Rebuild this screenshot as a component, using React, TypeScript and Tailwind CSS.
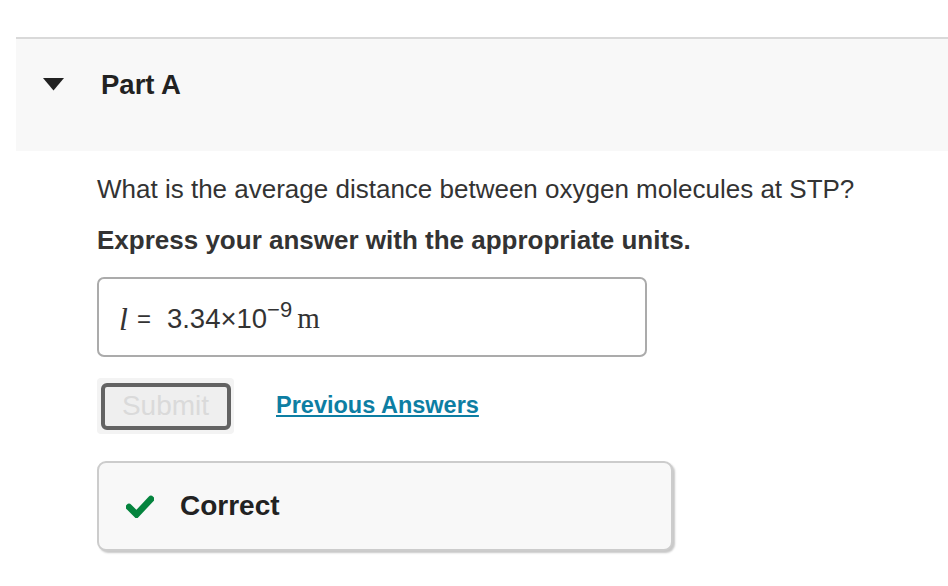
import React from "react";

export default function App() {
  return (
    <div className="min-h-[586px] w-[948px] bg-white pt-[37px] font-['Liberation_Sans',Arial,sans-serif] text-[#333]">
      {/* Header band */}
      <div className="ml-[16px] h-[114px] border-t-2 border-[#d9d9d9] bg-[#f8f8f8] pt-[30px]">
        <div className="flex h-[32px] items-center">
          <svg width="21" height="13" viewBox="0 0 21 13" className="ml-[27px] mt-[-2px]">
            <polygon points="0,0 21,0 10.5,12.5" fill="#222" />
          </svg>
          <span className="ml-[37px] text-[27.5px] font-bold leading-[32px] text-[#222]">Part A</span>
        </div>
      </div>

      {/* Content */}
      <div className="pl-[97px]">
        <p className="mt-[23px] text-[26px] leading-[30px] text-[#333]">
          What is the average distance between oxygen molecules at STP?
        </p>
        <p className="mt-[21px] text-[26px] font-bold leading-[30px] text-[#333]">
          Express your answer with the appropriate units.
        </p>

        {/* Answer box */}
        <div className="mt-[22px] flex h-[80px] w-[550px] items-center rounded-[7px] border-2 border-[#ababab] bg-white pl-[20px] pt-[4px]">
          <span className="font-['Liberation_Serif',serif] text-[32px] leading-none italic text-[#333]">l</span>
          <span className="ml-[9px] text-[24px] text-[#333]">=</span>
          <span className="ml-[16px] text-[27.5px] text-[#333]">3.34×10</span>
          <span className="relative top-[-10px] text-[22px] text-[#333]">−9</span>
          <span className="ml-[5px] font-['Liberation_Serif',serif] text-[29px] text-[#333]">m</span>
        </div>

        {/* Submit row */}
        <div className="mt-[21px] flex items-center">
          <div className="flex h-[56px] w-[137px] items-center justify-center rounded-[4px] bg-[#f3f3f3]">
            <div className="flex h-[47px] w-[130px] items-center justify-center rounded-[6px] border-4 border-[#636363] bg-[#efefef] text-[28px] leading-none text-[#dadada]">
              Submit
            </div>
          </div>
          <a className="ml-[42px] text-[23.5px] font-bold text-[#0d7ea3] underline decoration-2 underline-offset-[2px]">
            Previous Answers
          </a>
        </div>

        {/* Correct box */}
        <div className="mt-[27px] flex h-[90px] w-[576px] items-center rounded-[9px] border-2 border-[#cccccc] bg-[#f8f8f8] pl-[27px] shadow-[2px_2px_2px_rgba(0,0,0,0.22)]">
          <svg width="28" height="23" viewBox="0 0 28 23">
            <polyline points="3,12 10.5,19.5 25,4" fill="none" stroke="#05843e" strokeWidth="6.5" strokeLinejoin="miter" strokeLinecap="round" />
          </svg>
          <span className="ml-[26px] text-[28px] font-bold text-[#222]">Correct</span>
        </div>
      </div>
    </div>
  );
}
